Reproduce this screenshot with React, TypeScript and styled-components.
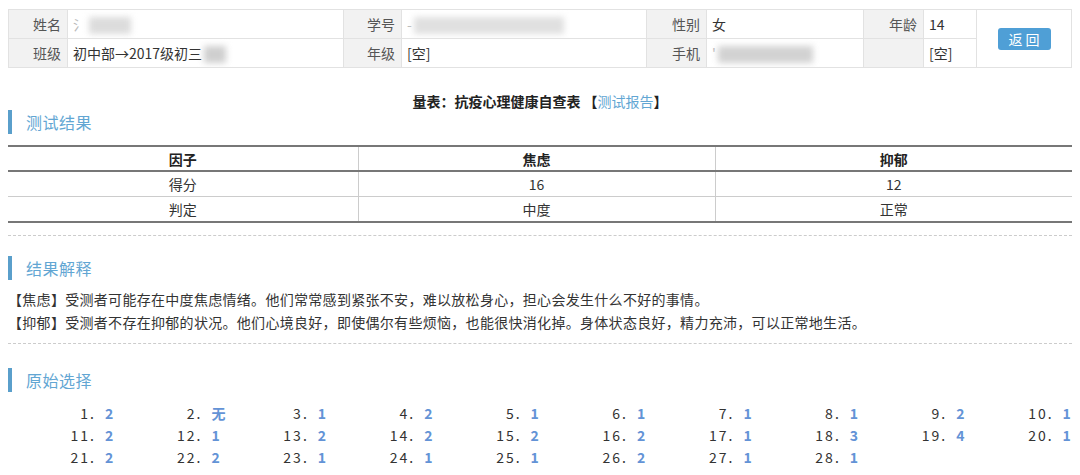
import React from 'react';
import styled, { createGlobalStyle } from 'styled-components';

const colors = {
  text: '#333333',
  label: '#555555',
  labelBg: '#f2f2f2',
  cellBorder: '#e2e2e2',
  accent: '#5a9fcb',
  accentText: '#62a6d3',
  answer: '#6393d6',
  button: '#4f9fd6',
  rule: '#777777',
  lightRule: '#cccccc',
};

const GlobalStyle = createGlobalStyle`
  body {
    margin: 8px;
    background: #ffffff;
    color: ${colors.text};
    font-family: "Noto Sans CJK SC", "Noto Sans", sans-serif;
    font-size: 14px;
  }
`;

const answers: string[] = [
  '2', '无', '1', '2', '1', '1', '1', '1', '2', '1',
  '2', '1', '2', '2', '2', '2', '1', '3', '4', '1',
  '2', '2', '1', '1', '1', '2', '1', '1',
];

const scores = [
  { factor: '焦虑', score: 16, level: '中度' },
  { factor: '抑郁', score: 12, level: '正常' },
];

const explanations = [
  '【焦虑】受测者可能存在中度焦虑情绪。他们常常感到紧张不安，难以放松身心，担心会发生什么不好的事情。',
  '【抑郁】受测者不存在抑郁的状况。他们心境良好，即使偶尔有些烦恼，也能很快消化掉。身体状态良好，精力充沛，可以正常地生活。',
];

const App = () => (
  <Page>
    <GlobalStyle />
    <InfoTable>
      <colgroup>
        <col style={{ width: 59 }} />
        <col style={{ width: 276 }} />
        <col style={{ width: 58 }} />
        <col style={{ width: 245 }} />
        <col style={{ width: 60 }} />
        <col style={{ width: 157 }} />
        <col style={{ width: 60 }} />
        <col style={{ width: 53 }} />
        <col />
      </colgroup>
      <tbody>
        <tr>
          <LabelCell>姓名</LabelCell>
          <ValueCell>
            <Faint>氵</Faint>
            <Masked $w={42} $tone="#dcdcdc" />
          </ValueCell>
          <LabelCell>学号</LabelCell>
          <ValueCell>
            <Faint>-</Faint>
            <Masked $w={150} $tone="#e0e0e0" />
          </ValueCell>
          <LabelCell>性别</LabelCell>
          <ValueCell>女</ValueCell>
          <LabelCell>年龄</LabelCell>
          <ValueCell>14</ValueCell>
          <ButtonCell rowSpan={2}>
            <BackButton type="button">返回</BackButton>
          </ButtonCell>
        </tr>
        <tr>
          <LabelCell>班级</LabelCell>
          <ValueCell>
            初中部→2017级初三
            <Masked $w={22} $tone="#cfcfcf" />
          </ValueCell>
          <LabelCell>年级</LabelCell>
          <ValueCell>[空]</ValueCell>
          <LabelCell>手机</LabelCell>
          <ValueCell>
            <Faint>'</Faint>
            <Masked $w={95} $tone="#d2d2d2" />
          </ValueCell>
          <LabelCell />
          <ValueCell>[空]</ValueCell>
        </tr>
      </tbody>
    </InfoTable>

    <ScaleTitle>
      量表：抗疫心理健康自查表 【<ReportLink>测试报告</ReportLink>】
    </ScaleTitle>

    <SectionHeader $top={0}>测试结果</SectionHeader>
    <ResultTable>
      <colgroup>
        <col style={{ width: 350 }} />
        <col style={{ width: 357 }} />
        <col />
      </colgroup>
      <thead>
        <tr>
          <HeadCell>因子</HeadCell>
          {scores.map((s) => (
            <HeadCell key={s.factor}>{s.factor}</HeadCell>
          ))}
        </tr>
      </thead>
      <tbody>
        <tr>
          <BodyCell>得分</BodyCell>
          {scores.map((s) => (
            <BodyCell key={s.factor}>{s.score}</BodyCell>
          ))}
        </tr>
        <tr>
          <BodyCell>判定</BodyCell>
          {scores.map((s) => (
            <BodyCell key={s.factor}>{s.level}</BodyCell>
          ))}
        </tr>
      </tbody>
    </ResultTable>

    <DashedRule $top={12} />
    <SectionHeader $top={20}>结果解释</SectionHeader>
    <Explain>
      {explanations.map((line) => (
        <p key={line}>{line}</p>
      ))}
    </Explain>

    <DashedRule $top={9} />
    <SectionHeader $top={24}>原始选择</SectionHeader>
    <AnswerGrid>
      {answers.map((a, i) => (
        <AnswerItem key={i}>
          <AnswerNo>{i + 1}.</AnswerNo>
          <AnswerValue>{a}</AnswerValue>
        </AnswerItem>
      ))}
    </AnswerGrid>
  </Page>
);

export default App;

const Page = styled.div`
  width: 1064px;
`;

const InfoTable = styled.table`
  width: 100%;
  margin-top: 1px;
  border-collapse: collapse;
  table-layout: fixed;
`;

const LabelCell = styled.td`
  height: 28px;
  padding: 0 6px 0 0;
  border: 1px solid ${colors.cellBorder};
  background: ${colors.labelBg};
  color: ${colors.label};
  text-align: right;
  font-size: 14px;
`;

const ValueCell = styled.td`
  padding: 0 0 0 5px;
  border: 1px solid ${colors.cellBorder};
  color: ${colors.text};
  font-size: 14px;
  white-space: nowrap;
  overflow: hidden;
`;

const ButtonCell = styled.td`
  border: 1px solid ${colors.cellBorder};
  text-align: center;
`;

const Faint = styled.span`
  color: #bbbbbb;
`;

const Masked = styled.span<{ $w: number; $tone: string }>`
  display: inline-block;
  width: ${({ $w }) => $w}px;
  height: 17px;
  margin-left: 2px;
  vertical-align: middle;
  background: ${({ $tone }) => $tone};
  filter: blur(3px);
`;

const BackButton = styled.button`
  width: 53px;
  height: 22px;
  padding: 0;
  border: 0;
  border-radius: 3px;
  background: ${colors.button};
  color: #ffffff;
  font-family: inherit;
  font-size: 14px;
  letter-spacing: 3px;
  text-indent: 3px;
  line-height: 22px;
  cursor: pointer;
`;

const ScaleTitle = styled.div`
  margin-top: 24px;
  line-height: 18px;
  text-align: center;
  font-size: 14px;
  font-weight: 700;
  color: #222222;
`;

const ReportLink = styled.a`
  font-weight: 400;
  color: ${colors.accentText};
  text-decoration: none;
`;

const SectionHeader = styled.h3<{ $top: number }>`
  margin: ${({ $top }) => $top}px 0 0;
  height: 24px;
  padding-left: 14px;
  border-left: 4px solid ${colors.accent};
  line-height: 24px;
  font-size: 16px;
  font-weight: 400;
  letter-spacing: 0.5px;
  color: ${colors.accentText};
`;

const ResultTable = styled.table`
  width: 100%;
  margin-top: 11px;
  border-collapse: collapse;
  table-layout: fixed;
  border-top: 2px solid ${colors.rule};
  border-bottom: 2px solid ${colors.rule};
`;

const HeadCell = styled.th`
  height: 23px;
  padding: 0;
  border-bottom: 2px solid ${colors.rule};
  border-left: 1px solid ${colors.lightRule};
  font-size: 14px;
  font-weight: 700;
  color: #222222;

  &:first-child {
    border-left: 0;
  }
`;

const BodyCell = styled.td`
  height: 24px;
  padding: 0;
  border-top: 1px solid ${colors.lightRule};
  border-left: 1px solid ${colors.lightRule};
  text-align: center;
  font-size: 14px;

  &:first-child {
    border-left: 0;
  }
`;

const DashedRule = styled.hr<{ $top: number }>`
  margin: ${({ $top }) => $top}px 0 0;
  height: 0;
  border: 0;
  border-top: 1px dashed ${colors.lightRule};
`;

const Explain = styled.div`
  margin-top: 8px;

  p {
    margin: 0;
    line-height: 23px;
    font-size: 14px;
    letter-spacing: 0.3px;
    color: ${colors.text};
  }
`;

const AnswerGrid = styled.div`
  display: grid;
  grid-template-columns: repeat(10, minmax(0, 1fr));
  margin-top: 10px;
`;

const AnswerItem = styled.div`
  display: flex;
  line-height: 22px;
  font-size: 14px;
`;

const AnswerNo = styled.span`
  flex: none;
  width: 88px;
  text-align: right;
  letter-spacing: 2px;
  color: ${colors.text};
`;

const AnswerValue = styled.span`
  margin-left: 9px;
  font-weight: 700;
  color: ${colors.answer};
`;
